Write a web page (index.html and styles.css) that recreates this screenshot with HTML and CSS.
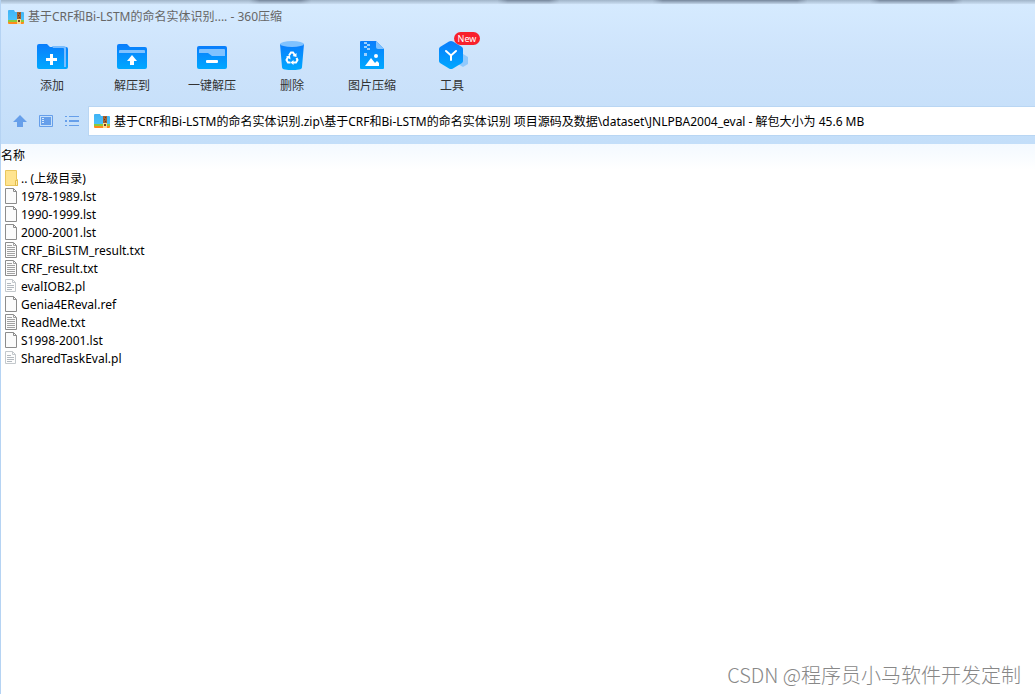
FILE: index.html
```html
<!DOCTYPE html>
<html lang="zh-CN">

<head>
    <meta charset="UTF-8">
    <meta name="viewport" content="width=device-width, initial-scale=1.0">
    <title>360压缩</title>
    <link rel="stylesheet" href="styles.css">
</head>

<body>
    <!-- shared gradients and icons -->
    <svg class="defs" width="0" height="0" aria-hidden="true">
        <defs>
            <linearGradient id="blue" x1="0" y1="0" x2="0" y2="1">
                <stop offset="0" stop-color="#0a7dfc" />
                <stop offset="1" stop-color="#00a8ff" />
            </linearGradient>
            <linearGradient id="sky" x1="0" y1="0" x2="0" y2="1">
                <stop offset="0" stop-color="#3fb2f5" />
                <stop offset="1" stop-color="#4cc4fa" />
            </linearGradient>
            <symbol id="zip" viewBox="0 0 16 16">
                <path d="M0 2q0-1 1-1h5l1 2h8q1 0 1 1v8H0z" fill="url(#sky)" />
                <path d="M0 11h16v2H0z" fill="#8ccb3c" />
                <path d="M0 13h16v1q0 1-1 1H1q-1 0-1-1z" fill="#ff8a1c" />
                <path d="M9 3h4v8H9z" fill="#a5602c" />
                <path d="M11 4h1v1h-1zM10 6h1v1h-1zM11 8h1v1h-1z" fill="#5c3b2a" />
                <path d="M9 10h4v5H9z" fill="#ffd98a" />
                <path d="M10 11h2v2h-2z" fill="#70401c" />
            </symbol>
            <symbol id="folder" viewBox="0 0 14 16">
                <path d="M.5.5h11v9h1v6H.5z" fill="#ffe48f" stroke="#e9c65d" />
                <path d="M10.500 15.500v-5h2v5z" fill="#ffeeb0" stroke="#e3bd4d" />
            </symbol>
            <symbol id="page" viewBox="0 0 14 16">
                <path d="M.5.5h8l3 3v12H.5z" fill="#fbfbfb" stroke="#8c8c8c" />
                <path d="M8.500.5v3h3" fill="none" stroke="#8c8c8c" />
            </symbol>
            <symbol id="text" viewBox="0 0 14 16">
                <path d="M.5.5h8l3 3v12H.5z" fill="#fbfbfb" stroke="#8c8c8c" />
                <path d="M8.500.5v3h3M2 3.500h5M2 5.500h8M2 7.500h8M2 9.500h8M2 11.500h8M2 13.500h8" fill="none" stroke="#a2a2a2" />
            </symbol>
            <symbol id="script" viewBox="0 0 14 16">
                <path d="M.5 1.500h7l3 3v9H.5z" fill="#fdfdfd" stroke="#c3c8cc" />
                <path d="M7.500 1.500v3h3" fill="none" stroke="#c3c8cc" />
                <path d="M2 5.500h4M2 7.500h7M2 9.500h7M2 11.500h5" stroke="#b3b9bf" />
            </symbol>
        </defs>
    </svg>

    <div class="window">
        <header class="chrome">
            <div class="titlebar">
                <svg class="zip-icon" aria-hidden="true"><use href="#zip" /></svg>
                <span>基于CRF和Bi-LSTM的命名实体识别.... - 360压缩</span>
            </div>

            <nav class="toolbar">
                <button type="button" class="tool">
                    <svg viewBox="0 0 36 32" aria-hidden="true">
                        <path d="M3 5q0-2 2-2h8l3 3h16q2 0 2 2v18q0 2-2 2H5q-2 0-2-2z" fill="url(#blue)" />
                        <path d="M18 5h12q2 0 2 2v19h-2V8q0-1-1-1H19z" fill="#79bdff" />
                        <path d="M16 13h3v4h4v3h-4v4h-3v-4h-4v-3h4z" fill="#fff" />
                    </svg>
                    <span>添加</span>
                </button>
                <button type="button" class="tool">
                    <svg viewBox="0 0 36 32" aria-hidden="true">
                        <path d="M3 5q0-2 2-2h8l3 3h15q2 0 2 2v18q0 2-2 2H5q-2 0-2-2z" fill="url(#blue)" />
                        <path d="M5 10q0-1 1-1h24q1 0 1 1v2H5z" fill="#80c2ff" />
                        <path d="M18 14l5 6h-3v4h-4v-4h-3z" fill="#fff" />
                    </svg>
                    <span>解压到</span>
                </button>
                <button type="button" class="tool">
                    <svg viewBox="0 0 36 32" aria-hidden="true">
                        <rect x="3" y="5" width="30" height="23" rx="2" fill="url(#blue)" />
                        <path d="M5 9q0-1 1-1h24q1 0 1 1v6H18l-4-3H5z" fill="#80c2ff" />
                        <rect x="12" y="19" width="12" height="3" rx="1" fill="#fff" />
                    </svg>
                    <span>一键解压</span>
                </button>
                <button type="button" class="tool">
                    <svg viewBox="0 0 36 32" aria-hidden="true">
                        <path d="M6 3h24l-2 23q0 2-3 2.500-7 1-14 0-3-.5-3-2.500z" fill="url(#blue)" />
                        <ellipse cx="18" cy="3" rx="12" ry="3" fill="#80c2ff" />
                        <g fill="none" stroke="#fff" stroke-width="2">
                            <path d="M15 14.500l2-3h2l2 3" />
                            <path d="M22.500 17l1 2-1.500 2.500h-3" />
                            <path d="M16.500 21.500h-2.500L12.500 19l1.500-3" />
                        </g>
                        <path d="M22.500 12v4l-4-1zM19.500 19v5l-3-2.500zM12 15.500l4-1 .5 4z" fill="#fff" />
                    </svg>
                    <span>删除</span>
                </button>
                <button type="button" class="tool">
                    <svg viewBox="0 0 36 32" aria-hidden="true">
                        <path d="M7 0h15l8 8v19q0 1-1 1H7q-1 0-1-1V1q0-1 1-1z" fill="url(#blue)" />
                        <path d="M22 0l8 8h-6q-2 0-2-2z" fill="#80c2ff" />
                        <path d="M10 1h3v2h-3zM13 3h3v2h-3zM10 5h3v2h-3zM13 7h3v2h-3zM10 12h3v3h-3z" fill="#9bd0ff" />
                        <circle cx="22" cy="15" r="2" fill="#fff" />
                        <path d="M11 25l6-8 4 5 2-2 2 2v3z" fill="#fff" />
                    </svg>
                    <span>图片压缩</span>
                </button>
                <button type="button" class="tool">
                    <svg viewBox="0 0 36 32" aria-hidden="true">
                        <path d="M29 13l5 3v7l-5 3-5-3v-7z" fill="#91c9fc" />
                        <path d="M17 0q1 0 2 .5L28 6q1 1 1 2v12q0 1-1 2l-9 5.500q-2 1-4 0L6 22q-1-1-1-2V8q0-1 1-2L15 .5q1-.5 2-.5z" fill="url(#blue)" />
                        <path d="M12 10l5 4.500 5-4.500M17 14.500V19" fill="none" stroke="#fff" stroke-width="2" stroke-linecap="round" />
                    </svg>
                    <span>工具</span>
                    <span class="badge">New</span>
                </button>
            </nav>

            <div class="addressbar">
                <button type="button" class="nav-btn" aria-label="向上">
                    <svg viewBox="0 0 16 16"><path d="M8 2l7 7h-4v5H5V9H1z" fill="#669fea" /></svg>
                </button>
                <button type="button" class="nav-btn" aria-label="视图">
                    <svg viewBox="0 0 16 16">
                        <path d="M1.500 2.500h13v11h-13z" fill="none" stroke="#669fea" />
                        <path d="M3 4h10v8H3z" fill="#669fea" />
                        <path d="M4 5h2v1H4zM4 7h2v1H4zM4 9h2v1H4z" fill="#d5e8fc" />
                    </svg>
                </button>
                <button type="button" class="nav-btn" aria-label="列表">
                    <svg viewBox="0 0 16 16"><path d="M1 3h2v1H1zM5 3h10v1H5zM1 7h2v2H1zM5 7h10v2H5zM1 12h2v1H1zM5 12h10v1H5z" fill="#669fea" /></svg>
                </button>
                <div class="path">
                    <svg class="zip-icon" aria-hidden="true"><use href="#zip" /></svg>
                    <input type="text" aria-label="路径" value="基于CRF和Bi-LSTM的命名实体识别.zip\基于CRF和Bi-LSTM的命名实体识别 项目源码及数据\dataset\JNLPBA2004_eval - 解包大小为 45.6 MB">
                </div>
            </div>
        </header>

        <main>
            <table class="files">
                <thead>
                    <tr><th>名称</th></tr>
                </thead>
                <tbody>
                    <tr><td><svg aria-hidden="true"><use href="#folder" /></svg>.. (上级目录)</td></tr>
                    <tr><td><svg aria-hidden="true"><use href="#page" /></svg>1978-1989.lst</td></tr>
                    <tr><td><svg aria-hidden="true"><use href="#page" /></svg>1990-1999.lst</td></tr>
                    <tr><td><svg aria-hidden="true"><use href="#page" /></svg>2000-2001.lst</td></tr>
                    <tr><td><svg aria-hidden="true"><use href="#text" /></svg>CRF_BiLSTM_result.txt</td></tr>
                    <tr><td><svg aria-hidden="true"><use href="#text" /></svg>CRF_result.txt</td></tr>
                    <tr><td><svg aria-hidden="true"><use href="#script" /></svg>evalIOB2.pl</td></tr>
                    <tr><td><svg aria-hidden="true"><use href="#page" /></svg>Genia4EReval.ref</td></tr>
                    <tr><td><svg aria-hidden="true"><use href="#text" /></svg>ReadMe.txt</td></tr>
                    <tr><td><svg aria-hidden="true"><use href="#page" /></svg>S1998-2001.lst</td></tr>
                    <tr><td><svg aria-hidden="true"><use href="#script" /></svg>SharedTaskEval.pl</td></tr>
                </tbody>
            </table>
        </main>

        <div class="watermark">CSDN @程序员小马软件开发定制</div>
    </div>
</body>

</html>
```
FILE: styles.css
```css
* {
    box-sizing: border-box;
}

body {
    margin: 0;
    font-family: "Noto Sans", "Noto Sans CJK SC", sans-serif;
    font-size: 12px;
    line-height: 18px;
    color: #000;
    background-color: #fff;
}

button,
input {
    font: inherit;
    border: none;
    padding: 0;
    background: none;
}

button {
    cursor: pointer;
}

.defs {
    position: absolute;
}

.window {
    position: relative;
    min-height: 100vh;
    border-left: 1px solid #b5d3f3;
    overflow: hidden;
}

.chrome {
    padding-top: 8px;
    background:
        linear-gradient(to bottom, transparent, #d5e9fd) 0 0 / 100% 5px no-repeat,
        linear-gradient(to right, #a0b4c8 24%, #74859a 25%, #74859a 29%, #a0b4c8 30%, #a0b4c8 48%, #74859a 49%, #74859a 53%, #a0b4c8 54%, #a0b4c8 63%, #74859a 64%, #74859a 77%, #a0b4c8 78%, #a0b4c8 84%, #74859a 85%, #74859a 92%, #a0b4c8 93%) 0 0 / 100% 4px no-repeat,
        linear-gradient(to bottom, #d6ebff, #cde3fb 60px, #c3def9);
}

.titlebar {
    display: flex;
    align-items: center;
    gap: 4px;
    padding-left: 7px;
    color: #666;
}

.zip-icon {
    flex: none;
    width: 16px;
    height: 16px;
}

.toolbar {
    display: flex;
    padding: 15px 11px 0;
}

.tool {
    position: relative;
    display: flex;
    flex-direction: column;
    align-items: center;
    gap: 4px;
    width: 80px;
    color: #333;
}

.tool svg {
    width: 36px;
    height: 32px;
    overflow: visible;
}

.badge {
    position: absolute;
    top: -9px;
    left: 42px;
    width: 26px;
    height: 13px;
    border-radius: 7px;
    background-color: #f8202c;
    color: #fff;
    font-size: 9px;
    line-height: 13px;
}

.addressbar {
    display: flex;
    align-items: center;
    padding: 11px 0 8px 6px;
}

.nav-btn {
    width: 26px;
    height: 16px;
}

.nav-btn svg {
    display: block;
    width: 16px;
    height: 16px;
    margin: 0 auto;
}

.path {
    flex: 1;
    display: flex;
    align-items: center;
    gap: 4px;
    height: 30px;
    margin-left: 3px;
    padding-left: 5px;
    border: 1px solid #b9d6f3;
    border-right: none;
    background-color: #fff;
}

.path input {
    flex: 1;
    min-width: 0;
    padding-top: 2px;
    outline: none;
}

.files {
    width: 100%;
    border-collapse: collapse;
}

.files th {
    height: 26px;
    padding: 0 0 3px;
    text-align: left;
    font-weight: normal;
    background: linear-gradient(to bottom, #f3f9ff, #fff);
}

.files td {
    height: 18px;
    padding: 0 0 0 4px;
}

.files td svg {
    width: 14px;
    height: 16px;
    margin-right: 2px;
    vertical-align: top;
}

.watermark {
    position: absolute;
    right: 14px;
    bottom: 4px;
    font-family: "Noto Sans CJK SC", sans-serif;
    font-size: 20px;
    font-weight: 300;
    line-height: 30px;
    color: #888;
}
```
